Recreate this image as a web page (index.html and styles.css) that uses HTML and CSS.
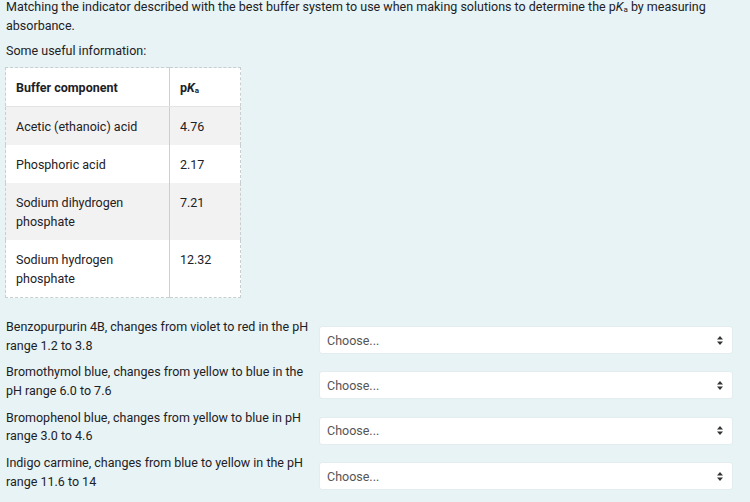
FILE: index.html
```html
<!DOCTYPE html>
<html>
<head>
<meta charset="utf-8">
<link rel="stylesheet" href="styles.css">
</head>
<body>
<div class="page">
  <p class="intro">Matching the indicator described with the best buffer system to use when making solutions to determine the p<i>K</i><sub>a</sub> by measuring absorbance.</p>
  <p class="info">Some useful information:</p>
  <table class="data">
    <tr class="head"><th class="c1">Buffer component</th><th class="c2">p<i>K</i><sub>a</sub></th></tr>
    <tr class="alt"><td class="c1">Acetic (ethanoic) acid</td><td class="c2">4.76</td></tr>
    <tr><td class="c1">Phosphoric acid</td><td class="c2">2.17</td></tr>
    <tr class="alt"><td class="c1">Sodium dihydrogen phosphate</td><td class="c2">7.21</td></tr>
    <tr><td class="c1">Sodium hydrogen phosphate</td><td class="c2">12.32</td></tr>
  </table>
  <div class="questions">
    <div class="q">
      <div class="label">Benzopurpurin 4B, changes from violet to red in the pH range 1.2 to 3.8</div>
      <div class="select"><span>Choose...</span><svg class="arrows" width="6" height="9" viewBox="0 0 6 9"><path d="M3 0L6 3.5H0Z M3 9L0 5.5H6Z" fill="#333"/></svg></div>
    </div>
    <div class="q">
      <div class="label">Bromothymol blue, changes from yellow to blue in the pH range 6.0 to 7.6</div>
      <div class="select"><span>Choose...</span><svg class="arrows" width="6" height="9" viewBox="0 0 6 9"><path d="M3 0L6 3.5H0Z M3 9L0 5.5H6Z" fill="#333"/></svg></div>
    </div>
    <div class="q">
      <div class="label">Bromophenol blue, changes from yellow to blue in pH range 3.0 to 4.6</div>
      <div class="select"><span>Choose...</span><svg class="arrows" width="6" height="9" viewBox="0 0 6 9"><path d="M3 0L6 3.5H0Z M3 9L0 5.5H6Z" fill="#333"/></svg></div>
    </div>
    <div class="q">
      <div class="label">Indigo carmine, changes from blue to yellow in the pH range 11.6 to 14</div>
      <div class="select"><span>Choose...</span><svg class="arrows" width="6" height="9" viewBox="0 0 6 9"><path d="M3 0L6 3.5H0Z M3 9L0 5.5H6Z" fill="#333"/></svg></div>
    </div>
  </div>
</div>
</body>
</html>
```
FILE: styles.css
```css
html, body {
  margin: 0;
  padding: 0;
  background: #e7f3f5;
}
body {
  font-family: Roboto, "Liberation Sans", sans-serif;
  font-size: 12.5px;
  line-height: 19px;
  color: #1d2125;
}
.page {
  padding: 0 17px 0 6px;
  margin-top: -3px;
}
p {
  margin: 0;
}
sub {
  font-size: 8px;
  line-height: 0;
  vertical-align: -1px;
}
.intro {
  margin-bottom: 6px;
}
.info {
  margin-bottom: 7px;
}
.data {
  border-collapse: collapse;
  margin-left: -1px;
  border: 1px dashed #c8cfd1;
  width: 236px;
}
.data th, .data td {
  text-align: left;
  vertical-align: top;
  padding: 10px 10px 9px 10px;
  background: #fff;
}
.data th {
  font-weight: bold;
  border-bottom: 1px solid #e4e4e4;
}
.data tr.alt td {
  background: #f2f2f2;
}
.data .c1 {
  width: 143px;
  border-right: 1px solid #cfcfcf;
}
.questions {
  margin-top: 20px;
  display: flex;
  flex-direction: column;
  gap: 8.4px;
}
.q {
  display: grid;
  grid-template-columns: 307px 414px;
  column-gap: 6px;
  align-items: start;
}
.label {
  line-height: 18.5px;
}
.select {
  margin-top: 8px;
  height: 28px;
  box-sizing: border-box;
  background: #fff;
  border: 1px solid #e3ecee;
  border-radius: 3px;
  display: flex;
  align-items: center;
  justify-content: space-between;
  padding: 0 9px 0 7px;
  color: #555;
}
.arrows {
  display: block;
}
```
